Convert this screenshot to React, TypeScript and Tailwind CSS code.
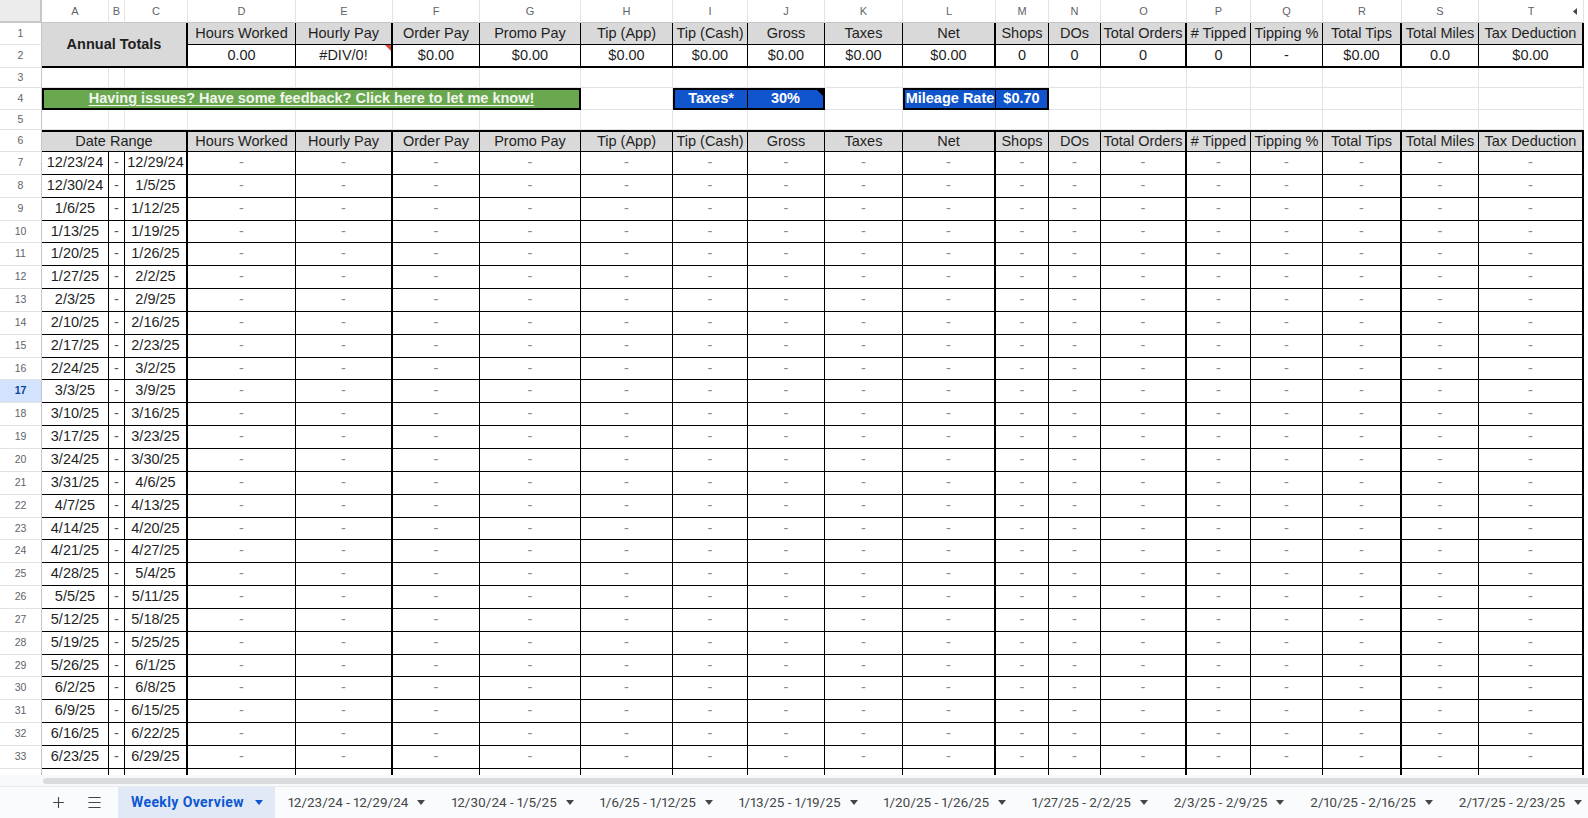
import React from 'react';
import { Plus, Menu } from 'lucide-react';

const letters = ['A', 'B', 'C', 'D', 'E', 'F', 'G', 'H', 'I', 'J', 'K', 'L', 'M', 'N', 'O', 'P', 'Q', 'R', 'S', 'T'];
const metricCols = letters.slice(3);

const heads = [
  'Hours Worked', 'Hourly Pay', 'Order Pay', 'Promo Pay', 'Tip (App)', 'Tip (Cash)', 'Gross', 'Taxes', 'Net',
  'Shops', 'DOs', 'Total Orders', '# Tipped', 'Tipping %', 'Total Tips', 'Total Miles', 'Tax Deduction',
];

const totals = [
  '0.00', '#DIV/0!', '$0.00', '$0.00', '$0.00', '$0.00', '$0.00', '$0.00', '$0.00',
  '0', '0', '0', '0', '-', '$0.00', '0.0', '$0.00',
];

// columns whose right edge is drawn with a thick rule
const thick = new Set(['C', 'E', 'L', 'O', 'R', 'T']);

const tabs = [
  '12/23/24 - 12/29/24', '12/30/24 - 1/5/25', '1/6/25 - 1/12/25', '1/13/25 - 1/19/25', '1/20/25 - 1/26/25',
  '1/27/25 - 2/2/25', '2/3/25 - 2/9/25', '2/10/25 - 2/16/25', '2/17/25 - 2/23/25',
];

const fmt = (d: Date) => `${d.getMonth() + 1}/${d.getDate()}/${String(d.getFullYear()).slice(2)}`;
const weeks = Array.from({ length: 27 }, (_, i) => [
  fmt(new Date(2024, 11, 23 + i * 7)),
  fmt(new Date(2024, 11, 29 + i * 7)),
]);
// row 34 is only a sliver at the bottom edge, so no text in it
weeks.push(['', '']);

const rightRule = (l: string) => (thick.has(l) ? 'border-r-2 border-r-black' : 'border-r border-r-black');
const light = 'border-r border-b border-[#e2e3e3]';

function Cell({ className = '', children }: { className?: string; children?: React.ReactNode }) {
  return (
    <div className={`flex items-center justify-center overflow-hidden whitespace-nowrap ${className}`}>
      {children}
    </div>
  );
}

function RowHead({ n }: { n: number }) {
  const on = n === 17;
  return (
    <Cell
      className={`border-r border-r-[#c4c7c5] border-b border-b-[#e1e3e1] text-[10.5px] ${
        on ? 'bg-[#d3e3fd] text-[#0842a0] font-bold' : 'bg-white text-[#5f6368]'
      }`}
    >
      {n}
    </Cell>
  );
}

function Caret({ className = '' }: { className?: string }) {
  return (
    <svg width="8" height="5" viewBox="0 0 8 5" className={className}>
      <path d="M0 0h8L4 5z" fill="currentColor" />
    </svg>
  );
}

function Sheet() {
  return (
    <div className="grid w-[1584px] grid-cols-[42px_67px_16px_63px_108px_97px_87px_101px_92px_75px_77px_78px_93px_53px_52px_86px_64px_72px_79px_77px_105px] grid-rows-[23px_22px_23px_20px_22px_20px_22px_repeat(28,22.85px)] font-['Liberation_Sans',Arial,sans-serif] text-[14.5px] text-[#1f1f1f]">
      {/* column letters */}
      <div className="bg-[#ececec] border-r-2 border-b-2 border-[#c7c7c7]" />
      {letters.map((l) => (
        <Cell
          key={l}
          className="relative bg-white border-r border-r-[#e1e3e1] border-b border-b-[#c4c7c5] text-[11px] text-[#5f6368]"
        >
          {l}
          {l === 'T' && (
            <svg width="4" height="7" viewBox="0 0 4 7" className="absolute right-[6px] top-[8px] text-[#444746]">
              <path d="M4 0v7L0 3.5z" fill="currentColor" />
            </svg>
          )}
        </Cell>
      ))}

      {/* row 1 */}
      <RowHead n={1} />
      <Cell className="col-span-3 row-span-2 bg-[#d9d9d9] border-r-2 border-r-black border-b-2 border-b-black font-bold">
        Annual Totals
      </Cell>
      {metricCols.map((l, i) => (
        <Cell key={l} className={`bg-[#d9d9d9] ${rightRule(l)} border-b border-b-black`}>
          {heads[i]}
        </Cell>
      ))}

      {/* row 2 */}
      <RowHead n={2} />
      {metricCols.map((l, i) => (
        <Cell key={l} className={`relative bg-white ${rightRule(l)} border-b-2 border-b-black`}>
          {totals[i]}
          {l === 'E' && (
            <svg width="6" height="6" viewBox="0 0 6 6" className="absolute right-0 top-0">
              <path d="M0 0h6v6z" fill="#e0453a" />
            </svg>
          )}
        </Cell>
      ))}

      {/* row 3 */}
      <RowHead n={3} />
      {letters.map((l) => (
        <div key={l} className={light} />
      ))}

      {/* row 4 */}
      <RowHead n={4} />
      <Cell className="col-span-7 bg-[#6aa84f] border-2 border-black font-bold text-[#f1f5ee] underline underline-offset-2">
        Having issues? Have some feedback? Click here to let me know!
      </Cell>
      <div className={light} />
      <Cell className="bg-[#1155cc] border-y-2 border-l-2 border-r border-black text-white font-bold">Taxes*</Cell>
      <Cell className="relative bg-[#1155cc] border-y-2 border-r-2 border-black text-white font-bold">
        30%
        <svg width="6" height="6" viewBox="0 0 6 6" className="absolute right-0 top-0">
          <path d="M0 0h6v6z" fill="#000" />
        </svg>
      </Cell>
      <div className={light} />
      <Cell className="bg-[#1155cc] border-y-2 border-l-2 border-r border-black text-white font-bold">Mileage Rate</Cell>
      <Cell className="bg-[#1155cc] border-y-2 border-r-2 border-black text-white font-bold">$0.70</Cell>
      {letters.slice(13).map((l) => (
        <div key={l} className={light} />
      ))}

      {/* row 5 */}
      <RowHead n={5} />
      {letters.map((l) => (
        <div key={l} className={light} />
      ))}

      {/* row 6 */}
      <RowHead n={6} />
      <Cell className="col-span-3 bg-[#d9d9d9] border-t-2 border-t-black border-r-2 border-r-black border-b border-b-black">
        Date Range
      </Cell>
      {metricCols.map((l, i) => (
        <Cell key={l} className={`bg-[#d9d9d9] border-t-2 border-t-black ${rightRule(l)} border-b border-b-black`}>
          {heads[i]}
        </Cell>
      ))}

      {/* weekly rows */}
      {weeks.map(([start, end], r) => (
        <React.Fragment key={r}>
          <RowHead n={r + 7} />
          <Cell className="border-r border-b border-black">{start}</Cell>
          <Cell className="border-r border-b border-black text-[#555]">{start && '-'}</Cell>
          <Cell className="border-r-2 border-r-black border-b border-b-black">{end}</Cell>
          {metricCols.map((l) => (
            <Cell key={l} className={`${rightRule(l)} border-b border-b-black text-[#8a8a8a]`}>
              {start && '-'}
            </Cell>
          ))}
        </React.Fragment>
      ))}
    </div>
  );
}

export default function App() {
  return (
    <div className="w-[1588px] h-[818px] flex flex-col overflow-hidden bg-white">
      <div className="h-[775px] overflow-hidden shrink-0">
        <Sheet />
      </div>

      {/* horizontal scrollbar */}
      <div className="h-[11px] shrink-0 flex items-center pl-[43px] bg-[#f8f9fa]">
        <div className="h-[6px] flex-1 rounded-l-full bg-[#dadce0]" />
      </div>

      {/* sheet tabs */}
      <div className="h-[32px] shrink-0 flex items-stretch bg-[#f9fbfd] border-t border-[#e8eaed] font-['Roboto',sans-serif] text-[13.5px] text-[#444746] whitespace-nowrap proportional-nums">
        <div className="w-[40px] shrink-0" />
        <div className="w-[36px] shrink-0 flex items-center justify-center">
          <Plus size={17} strokeWidth={1.6} />
        </div>
        <div className="w-[36px] shrink-0 flex items-center justify-center">
          <Menu size={17} strokeWidth={1.6} />
        </div>
        <div className="ml-[6px] shrink-0 flex items-center gap-[11px] pl-[13px] pr-[12px] bg-[#e1e9f7] text-[#0b57d0] text-[14px] font-bold tracking-[0.4px]">
          Weekly Overview
          <Caret />
        </div>
        {tabs.map((t) => (
          <div key={t} className="shrink-0 flex items-center gap-[9px] px-[13px]">
            {t}
            <Caret />
          </div>
        ))}
      </div>
    </div>
  );
}
